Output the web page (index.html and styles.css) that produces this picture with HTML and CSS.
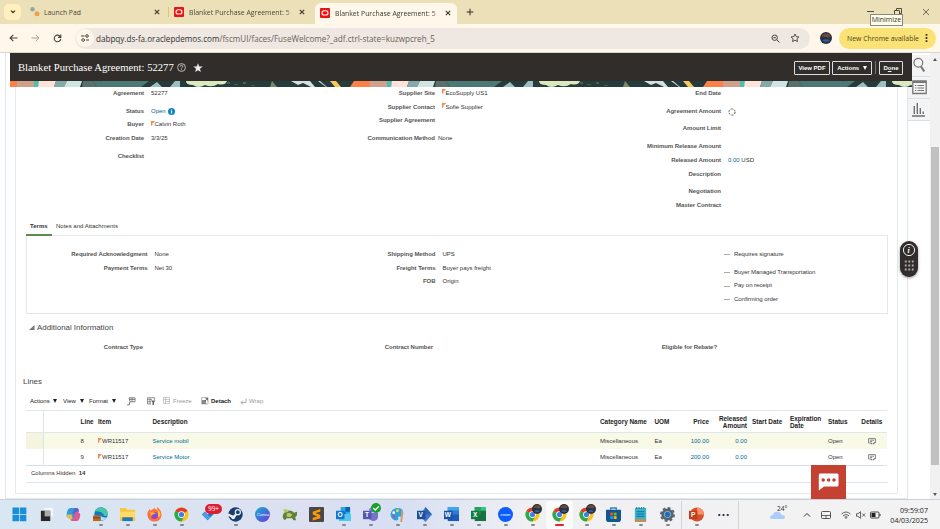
FILE: index.html
```html
<!DOCTYPE html>
<html lang="en">
<head>
    <meta charset="UTF-8">
    <meta name="viewport" content="width=device-width, initial-scale=1.0">
    <title>Blanket Purchase Agreement: 52277</title>
    <link rel="stylesheet" href="styles.css">
</head>
<body>
    <!-- shared icons -->
    <svg class="defs" width="0" height="0">
        <symbol id="flag" viewBox="0 0 4 5"><path d="M0 0h4L2.6 1.7H1.5V4L0 5z" fill="#f6894a"/></symbol>
        <symbol id="oracle" viewBox="0 0 10 10"><rect width="10" height="10" rx="1" fill="#ee1111"/><rect x="2" y="2.8" width="6" height="4.2" rx="2.1" fill="none" stroke="#fff" stroke-width="1.1"/></symbol>
        <symbol id="close" viewBox="0 0 6 6"><path d="M.8.8l4.4 4.4M5.2.8L.8 5.2" stroke="#3c3828" stroke-width="1.1"/></symbol>
        <symbol id="chrome" viewBox="0 0 16 16">
            <circle cx="8" cy="8" r="7.5" fill="#fbc116"/>
            <path d="M8 8L1.5 4.2A7.5 7.5 0 0 1 14.5 4.2z" fill="#e33b2e"/>
            <path d="M8 8L1.5 4.2A7.5 7.5 0 0 0 8 15.5L11 9.7z" fill="#2da94f"/>
            <circle cx="8" cy="8" r="3.6" fill="#fff"/><circle cx="8" cy="8" r="2.8" fill="#3f7fe8"/>
        </symbol>
        <symbol id="avatar" viewBox="0 0 10 10"><circle cx="5" cy="5" r="5" fill="#27313f"/><path d="M1 3.3Q4 0 8.5 2L8 4.5 3 4z" fill="#6b4b35"/><path d="M2 7q3-2 6 0-2 2.5-6 0z" fill="#2c5f97"/></symbol>
        <symbol id="note" viewBox="0 0 8 7"><path d="M.6 5V.6h6.8V5M2 2.2h4M2 3.6h2M.6 5h2l1 1.2V5h.6" fill="none" stroke="#666" stroke-width=".8"/><path d="M4.5 6l2-2 .8.8-2 1.6z" fill="#666"/></symbol>
        <symbol id="art" viewBox="0 0 353 6">
            <rect width="353" height="6" fill="#263c3c"/>
            <path d="M4 0h17v6H0z" fill="#fb8148"/><path d="M20 0h18v6H20z" fill="#cda18b"/><path d="M37 0h6l-2 6h-4z" fill="#4ebfae"/>
            <path d="M42 0h17l-2 6H41z" fill="#ffe3d8"/><path d="M59 0h11l-3 6H57z" fill="#83aaa8"/><path d="M70 0h15l-2 6H67z" fill="#cfe5e4"/>
            <path d="M86 0h10l4 6H85z" fill="#57716c"/><path d="M96 0h56l-8 6h-44z" fill="#4b7975"/>
            <path d="M153 6l7-5 5 5zM173 6l5-6h5v6z" fill="#9ac0c0"/><path d="M189 0h41q-2 5-9 3-6 4-13 1-7 4-12 0-7 0-7-4z" fill="#dce8bf"/>
            <path d="M230 1h3v2h-3zM237 3h4v1h-4zM246 1h3v2h-3zM254 4h4v1h-4z" fill="#4b5c50"/><path d="M273 6l2-6 5 6z" fill="#7d8667"/>
            <path d="M294 0l7 4 5-2 8 4h4l-5-6zM321 0l8 6h1l-7-6z" fill="#d5dfe2"/><path d="M333 0h6l5 6h-6z" fill="#f8c85c"/>
        </symbol>
    </svg>

    <div class="tabstrip">
        <div class="tab-search"><svg width="6" height="4"><path d="M1 .7l2 2 2-2" fill="none" stroke="#302c20" stroke-width="1.2"/></svg></div>
        <div class="tab tab-first">
            <svg width="10" height="10"><circle cx="2.6" cy="2.3" r="2.2" fill="#8da9a5"/><circle cx="7" cy="6.7" r="2.5" fill="#f0a04b"/></svg>
            <span>Launch Pad</span>
            <svg class="x"><use href="#close"/></svg>
        </div>
        <div class="tab tab-second">
            <svg class="fav"><use href="#oracle"/></svg>
            <span>Blanket Purchase Agreement: 5</span>
            <svg class="x"><use href="#close"/></svg>
        </div>
        <div class="tab tab-active">
            <svg class="fav"><use href="#oracle"/></svg>
            <span>Blanket Purchase Agreement: 5</span>
            <svg class="x"><use href="#close"/></svg>
        </div>
        <svg class="new-tab" width="8" height="8"><path d="M4 .7v6.6M.7 4h6.6" stroke="#302c20"/></svg>
        <div class="window-buttons">
            <svg width="7" height="8"><path d="M0 3.5h7" stroke="#504c40"/></svg>
            <svg width="8" height="8"><path d="M.5 2.5h5v5h-5zM2.5 2.5v-2h5v5h-2" fill="none" stroke="#504c40"/></svg>
            <svg width="8" height="8"><path d="M1 1l6 6M7 1L1 7" stroke="#504c40" stroke-width=".8"/></svg>
        </div>
    </div>
    <div class="tooltip">Minimize</div>

    <div class="toolbar">
        <svg width="9" height="8"><path d="M8.5 4H1.2M4.3.8L1.1 4l3.2 3.2" fill="none" stroke="#45423b" stroke-width="1.1"/></svg>
        <svg width="9" height="8"><path d="M.5 4h7.3M4.7.8L7.9 4 4.7 7.2" fill="none" stroke="#a5a198"/></svg>
        <svg width="9" height="9"><path d="M7.3 2.6A3.3 3.3 0 1 0 7.8 4.9M7.8.6v2.8H5" fill="none" stroke="#45423b" stroke-width="1.1"/></svg>
        <div class="address">
            <div class="site-info"><svg width="9" height="8"><path d="M0 2h3.5M8 6H5" stroke="#45423b"/><circle cx="6" cy="2" r="1.3" fill="none" stroke="#45423b"/><circle cx="2.2" cy="6" r="1.3" fill="none" stroke="#45423b"/></svg></div>
            <span class="url">dabpqy.ds-fa.oraclepdemos.com<i>/fscmUI/faces/FuseWelcome?_adf.ctrl-state=kuzwpcreh_5</i></span>
            <svg width="9" height="9"><circle cx="3.7" cy="3.7" r="2.7" fill="none" stroke="#45423b"/><path d="M5.7 5.7l2.8 2.8M2.4 3.7H5" stroke="#45423b"/></svg>
            <svg width="10" height="10"><path d="M5 1l1.2 2.6 2.8.3-2.1 1.9.6 2.8L5 7.2 2.5 8.6l.6-2.8L1 3.9l2.8-.3z" fill="none" stroke="#45423b" stroke-width=".9"/></svg>
        </div>
        <svg class="profile"><use href="#avatar"/></svg>
        <div class="update">New Chrome available <svg width="3" height="10"><path d="M1.5 1v1.8M1.5 4.1v1.8M1.5 7.2V9" stroke="#302c20" stroke-width="1.7"/></svg></div>
    </div>

    <div class="viewport">
        <div class="page-header">
            <div class="header-bar">
                <h1>Blanket Purchase Agreement: 52277</h1>
                <svg width="9" height="9"><circle cx="4.5" cy="4.5" r="3.9" fill="none" stroke="#ddd" stroke-width=".8"/><path d="M3.2 3.6q0-1.3 1.3-1.3t1.3 1.1q0 .8-1.3 1.5v.5M4.5 6v.8" fill="none" stroke="#ddd" stroke-width=".8"/></svg>
                <svg class="star" width="10" height="10"><path d="M5 .3l1.2 3.2 3.5.1-2.8 2.1 1 3.4L5 7.2 2.1 9.1l1-3.4L.3 3.6l3.5-.1z" fill="#eee"/></svg>
                <div class="header-actions">
                    <button class="view">View PDF</button><button class="actions">Actions <b class="down"></b></button><i class="bar"></i><button class="done"><span>D<u>o</u>ne</span></button>
                </div>
            </div>
            <svg class="art" width="902" height="6"><use href="#art" x="-13" width="353" height="6"/><use href="#art" x="340" width="353" height="6"/><use href="#art" x="693" width="353" height="6"/></svg>
        </div>

        <div class="work-area">
            <div class="sheet">
                <div class="summary">
                    <dl>
                        <dt>Agreement</dt><dd>52277</dd>
                        <dt class="gap">Status</dt><dd class="gap"><a>Open</a><svg class="info" width="7" height="7"><circle cx="3.5" cy="3.5" r="3.5" fill="#0e84cc"/><path d="M3.5 1.5v1M3.5 3v2.4" stroke="#fff" stroke-width="1.1"/></svg></dd>
                        <dt>Buyer</dt><dd><svg class="flag"><use href="#flag"/></svg>Calvin Roth</dd>
                        <dt>Creation Date</dt><dd>3/3/25</dd>
                        <dt class="gap">Checklist</dt><dd class="gap"></dd>
                    </dl>
                    <dl>
                        <dt>Supplier Site</dt><dd><svg class="flag"><use href="#flag"/></svg>EcoSupply US1</dd>
                        <dt>Supplier Contact</dt><dd><svg class="flag"><use href="#flag"/></svg>Sofie Supplier</dd>
                        <dt>Supplier Agreement</dt><dd></dd>
                        <dt class="gap">Communication Method</dt><dd class="gap close">None</dd>
                    </dl>
                    <dl>
                        <dt>End Date</dt><dd></dd>
                        <dt class="gap">Agreement Amount</dt><dd class="gap"><svg width="8" height="8"><circle cx="4" cy="4" r="3.1" fill="none" stroke="#555" stroke-width="1" stroke-dasharray="2.1 1.15"/></svg></dd>
                        <dt class="gap">Amount Limit</dt><dd class="gap"></dd>
                        <dt class="gap">Minimum Release Amount</dt><dd class="gap"></dd>
                        <dt>Released Amount</dt><dd><a>0.00</a>&nbsp;USD</dd>
                        <dt>Description</dt><dd></dd>
                        <dt class="gap">Negotiation</dt><dd class="gap"></dd>
                        <dt>Master Contract</dt><dd></dd>
                    </dl>
                </div>

                <div class="tabs"><span class="selected">Terms</span><span>Notes and Attachments</span></div>
                <div class="terms">
                    <dl>
                        <dt>Required Acknowledgment</dt><dd>None</dd>
                        <dt>Payment Terms</dt><dd>Net 30</dd>
                    </dl>
                    <dl>
                        <dt>Shipping Method</dt><dd>UPS</dd>
                        <dt>Freight Terms</dt><dd>Buyer pays freight</dd>
                        <dt>FOB</dt><dd>Origin</dd>
                    </dl>
                    <ul>
                        <li>Requires signature</li>
                        <li class="gap">Buyer Managed Transportation</li>
                        <li>Pay on receipt</li>
                        <li>Confirming order</li>
                    </ul>
                </div>

                <h2 class="additional"><svg width="6" height="5"><path d="M0 5h5.5V0z" fill="#777"/></svg>Additional Information</h2>
                <div class="contract"><span>Contract Type</span><span>Contract Number</span><span>Eligible for Rebate?</span></div>

                <h2 class="lines-title">Lines</h2>
                <div class="table-tools">
                    <span class="menu">Actions <b class="down"></b></span>
                    <span class="menu view-menu">View <b class="down"></b></span>
                    <span class="menu format-menu">Format <b class="down"></b></span>
                    <svg class="t1" width="9" height="9"><path d="M2 .8h6v4H3zM2 2.4h6M5 .8v4M0 7.8h2.5V5" fill="none" stroke="#666" stroke-width=".8"/></svg>
                    <svg class="t2" width="9" height="9"><path d="M.5.7h7V3M.5.7V7H4M.5 2.6H5M.5 4.8H4M3 .7V7" fill="none" stroke="#777" stroke-width=".8"/><path d="M4 3.5h4.5L7 5.5V8H5.5V5.5z" fill="#666"/></svg>
                    <span class="off freeze"><svg width="8" height="8"><path d="M.5.5h6v6h-6zM.5 2.5h6M2.5.5v6M2.5 4.5h4" fill="none" stroke="#bbb" stroke-width=".8"/></svg>Freeze</span>
                    <span class="detach"><svg width="8" height="8"><path d="M.5.5h6.5v6.5h-6.5z" fill="none" stroke="#aaa" stroke-width=".8"/><path d="M1 3h4v4H1z" fill="#888"/><path d="M4 4l2.5-2.5M4.5 1.5h2v2" fill="none" stroke="#555" stroke-width=".8"/></svg>Detach</span>
                    <span class="off wrap"><svg width="7" height="7"><path d="M6 .5v4H1M3 2.5l-2 2 2 2" fill="none" stroke="#aaa"/></svg>Wrap</span>
                </div>
                <table>
                    <colgroup><col class="c-gutter"><col class="c-line"><col class="c-item"><col class="c-desc"><col class="c-cat"><col class="c-uom"><col class="c-price"><col class="c-rel"><col class="c-start"><col class="c-exp"><col class="c-status"><col class="c-details"></colgroup>
                    <tr><th></th><th class="line">Line</th><th>Item</th><th>Description</th><th>Category Name</th><th>UOM</th><th class="num">Price</th><th class="num">Released Amount</th><th>Start Date</th><th>Expiration Date</th><th>Status</th><th class="mid">Details</th></tr>
                    <tr class="current"><td></td><td class="line">8</td><td><svg class="flag"><use href="#flag"/></svg>WR11517</td><td><a>Service mobil</a></td><td>Miscellaneous</td><td>Ea</td><td class="num"><a>100.00</a></td><td class="num"><a>0.00</a></td><td></td><td></td><td>Open</td><td class="mid"><svg class="note"><use href="#note"/></svg></td></tr>
                    <tr><td></td><td class="line">9</td><td><svg class="flag"><use href="#flag"/></svg>WR11517</td><td><a>Service Motor</a></td><td>Miscellaneous</td><td>Ea</td><td class="num"><a>200.00</a></td><td class="num"><a>0.00</a></td><td></td><td></td><td>Open</td><td class="mid"><svg class="note"><use href="#note"/></svg></td></tr>
                </table>
                <div class="table-foot">Columns Hidden &nbsp;<b>14</b></div>
            </div>
        </div>

        <div class="rail">
            <div><svg width="14" height="17"><circle cx="6.3" cy="5.8" r="4.4" fill="none" stroke="#777" stroke-width="1.2"/><path d="M9 9.5l3.3 5" stroke="#777" stroke-width="2.2"/></svg></div>
            <div><svg width="15" height="15"><path d="M.8 1h13.4v12.5H.8z" fill="none" stroke="#777" stroke-width="1.3"/><path d="M1 2h13" stroke="#777" stroke-width="2"/><path d="M3 5.5h1.3M3 8h1.3M3 10.5h1.3M5.5 5.5H12M5.5 8H12M5.5 10.5H12" stroke="#777"/></svg></div>
            <div><svg width="14" height="14"><path d="M0 13h13M2.3 11V3M5.3 11V0M8.3 11V5M11.2 11V8.5" stroke="#6c7074" stroke-width="1.4"/></svg></div>
        </div>
        <div class="scrollbar"><i class="up"></i><div class="thumb"></div><i class="down-arrow"></i></div>

        <div class="guide"><svg width="18" height="36"><circle cx="9" cy="9" r="5.6" fill="none" stroke="#eee"/><text x="7.6" y="12">i</text><path d="M4.8 20.5h9M4.8 24.5h9M4.8 28.5h9" stroke="#aaa" stroke-width="1.8" stroke-dasharray="1.9 1.6"/></svg></div>
        <div class="chat"><svg width="21" height="18"><path d="M2 .5h17q1.5 0 1.5 1.5v10q0 1.5-1.5 1.5H6L.8 17.5V2Q.8.5 2 .5z" fill="#fff"/><circle cx="5.2" cy="7" r="1.8" fill="#c54232"/><circle cx="10.6" cy="7" r="1.8" fill="#c54232"/><circle cx="16" cy="7" r="1.8" fill="#c54232"/></svg></div>
    </div>

    <div class="taskbar">
        <div class="apps">
            <span><svg viewBox="0 0 16 16"><path d="M.5.5h7v7h-7zM8.3.5h7v7h-7zM.5 8.3h7v7h-7zM8.3 8.3h7v7h-7z" fill="#188fd8"/></svg></span>
            <span><svg viewBox="0 0 16 16"><path d="M6 1h9v9H6z" fill="#f8f8f8"/><path d="M2 4h10v11H2z" fill="#292929"/><path d="M6 4h6v6H6z" fill="#aaa"/></svg></span>
            <span><svg viewBox="0 0 16 16"><path d="M5 1h5q2 0 2 4l-2 7q-1 2-4 2-2 0-3-3H1Q0 7 2 3q1-2 3-2z" fill="#309bd9"/><path d="M6 15h5q3 0 4-5 1-4-3-5h-2L8 11q-1 3-3 3z" fill="#dc5a93"/><path d="M10 1h2q2 1 2 4h-4L9 8 7 6z" fill="#6b58cf"/><path d="M1 8h5l1 4q-1 2-3 1-3-1-3-5z" fill="#edba48"/></svg></span>
            <span class="open"><svg viewBox="0 0 16 16"><circle cx="8.5" cy="7.5" r="7.2" fill="#1677c5"/><path d="M1.5 5q3-5 8-4.5 6 1 6.4 6.5 0 3-4 2.5Q11 6 7 5 4 4 1.5 5z" fill="#46c8a5"/><path d="M8 9q2 3 7 2-3 4-7 3z" fill="#baddf6"/><path d="M0 9h8v6H0z" fill="#b96b22"/><path d="M0 11.5h8" stroke="#704018"/></svg></span>
            <span class="open"><svg viewBox="0 0 16 16"><path d="M0 1h6l2 2h8v12H0z" fill="#f8c53e"/><path d="M0 5h16v6H0z" fill="#ffda65"/><path d="M2.5 11h11v4h-11z" fill="#1d78bc"/></svg></span>
            <span class="open"><svg viewBox="0 0 16 16"><path d="M8 1q1 2 3 2V0q5 4 4.5 9-1 6.5-7.5 6.5T.5 9Q0 5 3 2l1 2z" fill="#ff7139"/><path d="M11 2q5 4 2.5 8Q11 12 12 7z" fill="#ffc836"/><circle cx="8" cy="9" r="3.7" fill="#8c45ce"/><path d="M3 6q3-2 7 1-4 0-5 3z" fill="#ffb232"/></svg></span>
            <span class="open"><svg><use href="#chrome"/></svg></span>
            <span><svg viewBox="0 0 16 16"><path d="M1 8l3-3 3 3 6-6 3 3-9 9z" fill="#2677c9"/><path d="M1 8l3-3 6 6-3 3z" fill="#4c9ae8"/></svg><b class="badge">99+</b></span>
            <span class="open"><svg viewBox="0 0 16 16"><circle cx="8" cy="8" r="7.7" fill="#163f70"/><path d="M0 8l6 3 4-5" stroke="#eee" stroke-width="2.5" fill="none"/><circle cx="10.5" cy="5.5" r="2.7" fill="#163f70" stroke="#eee" stroke-width="1.3"/><circle cx="5.5" cy="11" r="2" fill="#eee"/></svg></span>
            <span><svg viewBox="0 0 16 16"><defs><linearGradient id="canva" x2="1" y2="1"><stop stop-color="#12b6cf"/><stop offset="1" stop-color="#7133df"/></linearGradient></defs><circle cx="8" cy="8" r="8" fill="url(#canva)"/><text class="brand" x="2" y="9.5">Canva</text></svg></span>
            <span><svg viewBox="0 0 16 16"><path d="M1 12Q0 7 4 5q5-3 9 1l3-1q1 4-2 6l1 3h-3l-1-2H5l-2 2z" fill="#60803b"/><path d="M3 6L1 3l4-1 2 3M5 7l3-1 3 2-2 3-4-1z" fill="#b8c963"/></svg></span>
            <span><svg viewBox="0 0 16 16"><rect width="16" height="16" rx="1" fill="#484848"/><path d="M12 2v3L7 6.5l5 2V12l-8 2.5v-3L9 10 4 8V5z" fill="#ff9800"/></svg></span>
            <span class="open"><svg viewBox="0 0 16 16"><path d="M5 0h10v9H5z" fill="#28a8ea"/><path d="M10 0h5v5h-5zM5 5h5v4H5z" fill="#0364b8"/><path d="M3 8l13-1v8H3z" fill="#50c8f0"/><rect y="4" width="9" height="9" fill="#0f78d4"/><text class="letter" x="1.5" y="11">O</text></svg></span>
            <span class="open"><svg viewBox="0 0 16 16"><circle cx="9" cy="3" r="2.5" fill="#7b83eb"/><path d="M6 6h10v5q-1 4-5 4-5-1-5-5z" fill="#7770ce"/><rect y="4" width="9" height="9" fill="#5558af"/><text class="letter" x="2" y="11">T</text></svg><b class="badge check"><svg viewBox="0 0 8 8"><path d="M1.8 4l1.6 1.6 3-3" stroke="#fff" fill="none"/></svg></b></span>
            <span class="open"><svg viewBox="0 0 16 16"><path d="M8 1q7 0 6 7-1 3-4 2-2 0-1 3-2 3-6 0-5-5 0-10 2-2 5-2z" fill="#29a4dc"/><circle cx="4" cy="6" r="1.5" fill="#fff"/><circle cx="8" cy="4" r="1.5" fill="#f9d24b"/><circle cx="4" cy="10" r="1.5" fill="#ce4c86"/><path d="M12 3l2 2-1 11h-2z" fill="#d59a67"/></svg></span>
            <span class="open"><svg viewBox="0 0 16 16"><path d="M9 0l7 8-7 8-6-7z" fill="#4378c8"/><path d="M9 0l7 8H9z" fill="#2f62b5"/><rect y="4" width="9" height="9" fill="#18509b"/><text class="letter" x="1.5" y="11">V</text></svg></span>
            <span class="open"><svg viewBox="0 0 16 16"><path d="M4 0h12v15H4z" fill="#185abd"/><path d="M4 0h12v4H4z" fill="#41a5ee"/><path d="M4 4h12v4H4z" fill="#2b7cd3"/><rect y="4" width="9" height="9" fill="#1852a5"/><text class="letter" x=".8" y="11">W</text></svg></span>
            <span class="open"><svg viewBox="0 0 16 16"><path d="M4 0h12v15H4z" fill="#18713f"/><path d="M10 0h6v4h-6z" fill="#33c481"/><path d="M4 0h6v8H4z" fill="#21a366"/><rect y="4" width="9" height="9" fill="#107c41"/><text class="letter" x="2" y="11">X</text></svg></span>
            <span class="open"><svg viewBox="0 0 16 16"><circle cx="8" cy="8" r="8" fill="#0b5cff"/><text class="brand" x="2.5" y="9.5">zoom</text></svg></span>
            <span class="open"><svg><use href="#chrome"/></svg><svg class="who"><use href="#avatar"/></svg></span>
            <span class="open focus"><svg><use href="#chrome"/></svg><svg class="who"><use href="#avatar"/></svg></span>
            <span class="open"><svg><use href="#chrome"/></svg><svg class="who"><use href="#avatar"/></svg></span>
            <span class="open"><svg viewBox="0 0 16 16"><path d="M5 3V1h6v2" stroke="#3983be" fill="none" stroke-width="1.5"/><path d="M0 3h16v10q0 3-3 3H3q-3 0-3-3z" fill="#14558f"/><path d="M4.5 6h3v3h-3z" fill="#f25022"/><path d="M8.3 6h3v3h-3z" fill="#7fba00"/><path d="M4.500 9.800h3v3h-3z" fill="#00a4ef"/><path d="M8.300 9.800h3v3h-3z" fill="#ffb900"/></svg></span>
            <span class="open"><svg viewBox="0 0 16 16"><path d="M2 1h12v14H2z" fill="#38b3cf"/><path d="M2 13h12v3H2z" fill="#c68d55"/><path d="M4 0v2M6.5 0v2M9 0v2M11.5 0v2M4 5h8M4 7.5h8M4 10h8" stroke="#176b8d"/></svg></span>
            <span class="open"><svg viewBox="0 0 16 16"><circle cx="8" cy="8" r="5" fill="#b8dcf5" stroke="#58636f" stroke-width="3"/><circle cx="8" cy="8" r="7" fill="none" stroke="#58636f" stroke-width="2" stroke-dasharray="3 2.5"/><circle cx="8" cy="8" r="3" fill="#1f6fbd"/></svg></span>
        </div>
        <div class="recent">
            <span class="open"><svg viewBox="0 0 16 16"><circle cx="8.5" cy="8" r="7.5" fill="#d35230"/><path d="M8.5.5A7.5 7.5 0 0 1 16 8H8.500z" fill="#ff8f6b"/><rect y="4" width="9" height="9" fill="#c43e1c"/><text class="letter" x="2" y="11">P</text></svg></span>
            <span><svg viewBox="0 0 16 16"><path d="M2.500 8.500h2M7 8.500h2M11.500 8.500h2" stroke="#333" stroke-width="2"/></svg></span>
        </div>
        <div class="weather"><svg width="17" height="10"><path d="M4 9Q0 9 1 6.500 2 5 4 5q1-4 5-3 3 0 3.500 3Q16 5 16 7q0 2-3 2z" fill="#a9cdf8"/></svg><span>24°</span></div>
        <div class="tray">
            <svg width="8" height="6"><path d="M1 4.500l3-3 3 3" fill="none" stroke="#333"/></svg>
            <svg class="pad" width="10" height="8"><rect x=".5" y=".5" width="9" height="7" rx="1" fill="none" stroke="#444" stroke-width=".9"/><path d="M.5 4.500h9M5 4.500v3" stroke="#444" stroke-width=".8"/></svg>
            <svg class="wifi" width="10" height="8"><path d="M.5 3Q5-1 9.500 3M2 4.700q3-2.500 6 0M3.500 6.200q1.500-1.200 3 0" fill="none" stroke="#555" stroke-width=".9"/><circle cx="5" cy="7" r=".8" fill="#444"/></svg>
            <svg class="mute" width="10" height="8"><path d="M.5 2.700H2L4.500.7v6.600L2 5.300H.5zM6.200 2.500l3 3M9.200 2.500l-3 3" fill="none" stroke="#444" stroke-width=".8"/></svg>
            <svg class="battery" width="11" height="8"><rect x=".5" y="1" width="8.500" height="6" rx="1" fill="none" stroke="#333" stroke-width=".9"/><path d="M1.500 2h4v4h-4z" fill="#222"/><path d="M10 3v2" stroke="#333"/></svg>
        </div>
        <div class="clock">09:59:07<br>04/03/2025</div>
    </div>
</body>
</html>
```
FILE: styles.css
```css
/* Basic styles */
* {
    box-sizing: border-box;
}
body {
    width: 940px;
    height: 529px;
    margin: 0;
    overflow: hidden;
    position: relative;
    background: #fff;
    color: #333;
    font-family: "Liberation Sans", Arial, sans-serif;
    font-size: 6px;
}
svg {
    display: block;
    flex: none;
}
.defs {
    position: absolute;
}
h1, h2, dl, dd, ul {
    margin: 0;
    padding: 0;
    font-weight: normal;
}
a {
    color: #006b8f;
}

/* Browser tabs */
.tabstrip {
    height: 24px;
    display: flex;
    align-items: center;
    background: #ece0b9;
    font-family: "Open Sans", sans-serif;
    font-size: 6.9px;
}
.tab-search {
    width: 17px;
    height: 16px;
    margin-left: 4px;
    border-radius: 5px;
    background: #fff0bd;
    display: flex;
    align-items: center;
    justify-content: center;
}
.tab {
    height: 20px;
    display: flex;
    align-items: center;
    color: #4b483b;
}
.tab span {
    flex: 1;
    white-space: nowrap;
}
.fav {
    width: 10px;
    height: 10px;
    margin-right: 5px;
}
.x {
    width: 6px;
    height: 6px;
}
.tab-first {
    width: 130px;
    margin-left: 9px;
}
.tab-first span {
    margin-left: 4px;
    font-size: 6.8px;
}
.tab-second {
    width: 137px;
    margin-left: 8px;
    padding-left: 6px;
}
.tab-second::before {
    content: "";
    width: 1px;
    height: 10px;
    margin-right: 5px;
    margin-left: -6px;
    background: #e3c95d;
}
.tab-second span, .tab-active span {
    -webkit-mask-image: linear-gradient(90deg, #000 88%, rgba(0, 0, 0, .3) 94%);
    mask-image: linear-gradient(90deg, #000 88%, rgba(0, 0, 0, .3) 94%);
}
.tab-active {
    width: 142px;
    height: 21px;
    margin-left: 10px;
    padding: 0 6px 1px 5px;
    align-self: flex-end;
    border-radius: 6px 6px 0 0;
    background: #fff8ea;
    color: #3c382c;
}
.new-tab {
    margin-left: 9px;
}
.window-buttons {
    margin-left: auto;
    padding-right: 10px;
    display: flex;
    gap: 20px;
}
.tooltip {
    position: absolute;
    z-index: 5;
    left: 870px;
    top: 14px;
    width: 33px;
    height: 12px;
    border: 1px solid #8b8979;
    background: #fffce8;
    font: 7px/10px "Open Sans", sans-serif;
    text-align: center;
}

/* Address bar */
.toolbar {
    height: 29px;
    padding: 0 4px 0 9px;
    display: flex;
    align-items: center;
    background: #fff8ea;
    border-bottom: 1px solid #d9d5ca;
    font-family: "Open Sans", sans-serif;
}
.toolbar > svg {
    margin-right: 13px;
}
.address {
    width: 735px;
    height: 21px;
    margin-right: 10px;
    border-radius: 11px;
    background: #efe8e2;
    display: flex;
    align-items: center;
}
.site-info {
    width: 18px;
    height: 18px;
    margin-left: 1px;
    border-radius: 50%;
    background: #fff8ea;
    display: flex;
    align-items: center;
    justify-content: center;
}
.url {
    flex: 1;
    margin-left: 2px;
    font-size: 8.1px;
    color: #33302b;
}
.url i {
    font-style: normal;
    color: #696157;
}
.address > svg {
    margin-right: 10px;
}
.toolbar .profile {
    width: 12px;
    height: 12px;
    margin-right: 7px;
}
.update {
    width: 97px;
    height: 21px;
    padding: 0 8px;
    border-radius: 11px;
    background: #fbe276;
    display: flex;
    align-items: center;
    justify-content: space-between;
    font-size: 6.9px;
    white-space: nowrap;
    color: #4b421d;
}

/* Page */
.viewport {
    position: relative;
    height: 446px;
    display: flex;
}
.page-header {
    position: absolute;
    z-index: 2;
    left: 10px;
    top: 0;
    width: 902px;
}
.header-bar {
    height: 28px;
    padding: 1px 9px 0 8px;
    display: flex;
    align-items: center;
    background: #312d2a;
    color: #fff;
}
h1 {
    width: 156px;
    margin-right: 3px;
    font: 10.65px Georgia, "Liberation Serif", serif;
    white-space: nowrap;
}
.star {
    margin-left: 7px;
}
.header-actions {
    margin-left: auto;
    display: flex;
    align-items: center;
}
button {
    height: 14px;
    margin: 0;
    padding: 0;
    border: 1px solid #ddd;
    border-radius: 1px;
    background: transparent;
    color: #fff;
    font: bold 6px "Liberation Sans", Arial, sans-serif;
}
.view {
    width: 36px;
}
.actions {
    width: 40px;
    margin-left: 2px;
}
.bar {
    width: 1px;
    height: 13px;
    margin: 0 3px;
    background: #77736f;
}
.done {
    width: 24px;
}
.down {
    display: inline-block;
    margin-left: 2px;
    border: 2px solid transparent;
    border-top: 4px solid;
    border-bottom: 0;
}
.work-area {
    width: 903px;
    margin-left: 5px;
    padding: 0 9px 5px;
    border: 1px solid #e1e7eb;
    border-top: 0;
}
.sheet {
    height: 441px;
    padding-top: 34px;
    border: 1px solid #e5eaee;
    border-top: 0;
}

/* Field groups */
.summary {
    height: 132px;
    display: grid;
    grid-template-columns: 291px 286px 1fr;
}
dl {
    display: grid;
    grid-template-columns: 128px 1fr;
    column-gap: 7px;
    align-content: start;
    line-height: 13.7px;
    white-space: nowrap;
}
dt {
    text-align: right;
    font-weight: bold;
    letter-spacing: -.04px;
    color: #555;
}
dd {
    display: flex;
    align-items: center;
}
.gap {
    margin-top: 4px;
}
.summary .close {
    margin-left: -4px;
}
.flag {
    width: 4px;
    height: 5px;
    margin-top: -4px;
}
dd .flag {
    margin-right: -.5px;
}
.info {
    margin-left: 2px;
}
.tabs {
    height: 17px;
    margin: 0 10px;
    display: flex;
    color: #333;
}
.tabs span {
    padding: 4px 4px 0;
}
.tabs .selected {
    width: 26px;
    border-bottom: 2px solid #5d8a4d;
    font-weight: bold;
}
.terms {
    height: 79px;
    margin: -1px 9px 0 10px;
    padding-top: 12px;
    border: 1px solid #e3e8ea;
    display: grid;
    grid-template-columns: 280px 417px 1fr;
}
.terms dl {
    grid-template-columns: 120.5px 1fr;
}
.terms dl + dl {
    grid-template-columns: 128.5px 1fr;
}
ul {
    list-style: none;
    line-height: 13.7px;
}
li {
    display: flex;
    align-items: center;
    letter-spacing: -.04px;
}
li::before {
    content: "";
    width: 6px;
    height: 1px;
    margin-right: 4px;
    background: #aaa;
}
h2 {
    font-size: 7.9px;
    color: #444;
}
.additional {
    height: 26px;
    padding-left: 13px;
    display: flex;
    align-items: center;
    gap: 2px;
}
.contract {
    height: 15px;
    display: grid;
    grid-template-columns: 127px 290px 284px;
    line-height: 15px;
    text-align: right;
    font-weight: bold;
    letter-spacing: -.05px;
    color: #555;
}
.lines-title {
    margin-top: 22px;
    padding-left: 7px;
    line-height: 10px;
}

/* Lines table */
.table-tools {
    height: 23px;
    padding: 5px 0 0 14px;
    display: flex;
    align-items: center;
    white-space: nowrap;
    color: #222;
}
.table-tools .menu {
    width: 33px;
}
.table-tools .view-menu {
    width: 26px;
}
.table-tools .format-menu {
    width: 38px;
}
.table-tools .t2 {
    margin-left: 11px;
}
.freeze, .detach, .wrap {
    display: flex;
    align-items: center;
    gap: 2px;
}
.freeze {
    width: 38px;
    margin-left: 7px;
}
.detach {
    width: 39px;
    font-weight: bold;
}
.off {
    color: #999;
}
table {
    width: 861px;
    margin-left: 10px;
    table-layout: fixed;
    border-collapse: collapse;
    border-top: 1px solid #dfe7ec;
    border-bottom: 1px solid #d5dfe8;
}
tr {
    height: 16.5px;
}
tr:first-child {
    height: 22px;
}
th, td {
    padding: 0 2.5px;
    text-align: left;
    vertical-align: middle;
    line-height: 7px;
}
th {
    border-bottom: 1px solid #dfe7ec;
    font-size: 6.4px;
    color: #222;
}
td .flag {
    float: left;
    margin-top: 0;
}
th:first-child, td:first-child {
    border-right: 1px solid #dde5eb;
}
.current td {
    background: #f9f9e8;
}
.current td:first-child {
    background: #f4f4df;
}
.line {
    padding-left: 36.5px;
}
.num {
    text-align: right;
}
.mid {
    text-align: center;
}
.note {
    width: 8px;
    height: 7px;
    margin: auto;
}
.c-gutter { width: 17.5px; }
.c-line { width: 52px; }
.c-item { width: 54.5px; }
.c-desc { width: 447.5px; }
.c-cat { width: 54.5px; }
.c-uom { width: 31px; }
.c-price { width: 28.5px; }
.c-rel { width: 38px; }
.c-start { width: 38px; }
.c-exp { width: 38px; }
.c-status { width: 31px; }
.c-details { width: 30.5px; }
.table-foot {
    height: 17px;
    margin: 0 9px 0 10px;
    padding-left: 5px;
    border-bottom: 1px solid #dfe5eb;
    line-height: 14px;
}

/* Right rail and scrollbar */
.rail {
    width: 22px;
    padding-top: 2px;
}
.rail div {
    height: 22px;
    padding-left: 4px;
    border-bottom: 1px solid #d5e1ea;
    background: #f4f4f4;
    display: flex;
    align-items: center;
}
.scrollbar {
    width: 10px;
    padding: 5px 1px;
    background: #f1f1f1;
    display: flex;
    flex-direction: column;
    align-items: center;
}
.up, .down-arrow {
    border: 2px solid transparent;
}
.up {
    border-top: 0;
    border-bottom: 3px solid #555;
}
.down-arrow {
    margin-top: auto;
    margin-bottom: -2px;
    border-bottom: 0;
    border-top: 3px solid #555;
}
.thumb {
    width: 8px;
    height: 318px;
    margin-top: 86px;
    background: #c1c1c1;
}
.guide {
    position: absolute;
    left: 900px;
    top: 188px;
    border-radius: 9px;
    background: #302d2c;
    box-shadow: 0 1px 3px #999;
}
.guide text {
    fill: #fff;
    font: italic bold 8px "Liberation Serif", serif;
}
.chat {
    position: absolute;
    left: 811px;
    top: 412px;
    width: 35px;
    height: 34px;
    background: #c54232;
    display: flex;
    align-items: center;
    justify-content: center;
}

/* Taskbar */
.taskbar {
    height: 30px;
    padding-left: 6px;
    display: flex;
    align-items: center;
    border-top: 1px solid #cbd0dc;
    background: linear-gradient(90deg, #d9e7f3, #dce0f0 33%, #d8dff3 43%, #f0f0f3 56%, #f3f3f3);
}
.apps, .recent {
    display: flex;
}
.apps span, .recent span {
    position: relative;
    width: 27px;
    height: 28px;
    padding-top: 6px;
}
.apps span > svg, .recent span > svg {
    width: 15px;
    height: 15px;
    margin: 0 auto;
}
.open::after {
    content: "";
    display: block;
    width: 4px;
    height: 1.5px;
    margin: 2.5px auto 0;
    border-radius: 1px;
    background: #85888e;
}
.recent {
    width: 58px;
    padding-left: 1px;
    border-left: 1px solid #d5d5d8;
    border-right: 1px solid #d5d5d8;
}
.focus {
    background: #fbfbfb;
    border-radius: 3px;
}
.focus::after {
    width: 9px;
    background: #df2338;
}
.badge {
    position: absolute;
    left: 10px;
    top: 3px;
    width: 17px;
    height: 10px;
    border-radius: 5px;
    background: #dc1e33;
    color: #fff;
    font: 6.5px/10px "Open Sans", sans-serif;
    text-align: center;
}
.check {
    left: 14px;
    top: 2px;
    width: 10px;
    background: #16a02c;
}
.apps span > .who {
    position: absolute;
    left: 13px;
    top: 3px;
    width: 10px;
    height: 10px;
}
.letter {
    fill: #fff;
    font: bold 7px "Liberation Sans", sans-serif;
}
.brand {
    fill: #fff;
    font: italic 4.5px "Liberation Sans", sans-serif;
}
.weather {
    position: relative;
    width: 30px;
    margin-left: 30px;
}
.weather span {
    position: absolute;
    left: 8px;
    top: -6px;
    font: 6.5px "Open Sans", sans-serif;
    color: #222;
}
.tray {
    display: flex;
    align-items: center;
    margin-left: 4px;
}
.pad, .wifi {
    margin-left: 10px;
}
.mute {
    margin-left: 5px;
}
.battery {
    margin-left: 4px;
}
.clock {
    margin-left: auto;
    padding-right: 12px;
    font: 7.1px/10px "Open Sans", sans-serif;
    text-align: right;
    color: #222;
}
```
